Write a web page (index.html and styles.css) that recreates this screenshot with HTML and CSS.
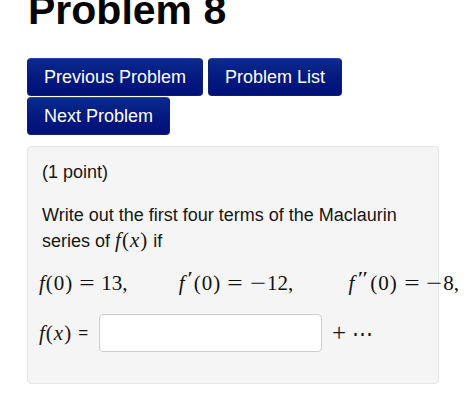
FILE: index.html
```html
<!DOCTYPE html>
<html>
<head>
<meta charset="utf-8">
<link rel="stylesheet" href="styles.css">
</head>
<body>
<div class="page">
  <h1 class="title">Problem 8</h1>
  <div class="nav">
    <a class="btn">Previous Problem</a>
    <a class="btn">Problem List</a>
    <a class="btn">Next Problem</a>
  </div>
  <div class="panel">
    <p class="points">(1 point)</p>
    <p class="text">Write out the first four terms of the Maclaurin series of <span class="mi">f</span><span class="mo">(</span><span class="mi">x</span><span class="mo">)</span> if</p>
    <div class="math-line">
      <span class="term"><span class="mi">f</span><span class="p">(</span>0<span class="p">)</span><span class="rel">=</span>13,</span>
      <span class="term t2"><span class="mi">f</span><span class="prime">′</span><span class="p">(</span>0<span class="p">)</span><span class="rel">=</span><span class="minus">−</span>12,</span>
      <span class="term t3"><span class="mi">f</span><span class="prime dbl">″</span><span class="p">(</span>0<span class="p">)</span><span class="rel">=</span><span class="minus">−</span>8,</span>
    </div>
    <div class="answer-row">
      <span class="lhs"><span class="mi">f</span><span class="p">(</span><span class="mi">x</span><span class="p">)</span></span><span class="eq">=</span>
      <span class="input"></span>
      <span class="rest"><span class="plus">+</span><span class="dots">⋯</span></span>
    </div>
  </div>
</div>
</body>
</html>
```

FILE: styles.css
```css
html, body {
  margin: 0;
  padding: 0;
  background: #ffffff;
}
body {
  font-family: "Liberation Sans", Arial, sans-serif;
  color: #111;
  overflow: hidden;
}
.page {
  padding-left: 27px;
  width: 447px;
}
.title {
  margin: -10px 0 0 1px;
  font-size: 41px;
  line-height: 41px;
  font-weight: bold;
  color: #050505;
}
.nav {
  margin-top: 27px;
  display: flex;
  flex-wrap: wrap;
  column-gap: 5px;
  row-gap: 1px;
  width: 330px;
}
.btn {
  display: block;
  box-sizing: border-box;
  height: 38px;
  line-height: 36px;
  padding: 0 16px;
  font-size: 18px;
  color: #ffffff;
  background: linear-gradient(#0b2a8e, #041a80 50%, #001078);
  border: 1px solid #0a2270;
  border-top-color: #2a46a0;
  border-radius: 4px;
  white-space: nowrap;
}
.panel {
  margin-top: 11px;
  box-sizing: border-box;
  width: 412px;
  height: 238px;
  background: #f5f5f5;
  border: 1px solid #e6e6e6;
  border-radius: 4px;
  padding: 12px 14px;
  font-size: 18px;
  line-height: 26px;
  color: #161616;
}
.panel p {
  margin: 0;
}
.points {
  margin-bottom: 17px !important;
}
.mi {
  font-family: "Liberation Serif", "Times New Roman", serif;
  font-style: italic;
  font-size: 21px;
}
.mo {
  font-family: "Liberation Serif", "Times New Roman", serif;
  font-size: 21px;
}
.text .mi, .text .mo {
  line-height: 0;
}
.text .mo {
  margin: 0 1px;
}
.p {
  margin: 0 1px;
}
.math-line {
  margin-top: 10px;
  margin-left: -3px;
  font-family: "Liberation Serif", "Times New Roman", serif;
  font-size: 21px;
  line-height: 30px;
  white-space: nowrap;
  color: #111;
}
.term {
  display: inline-block;
}
.t2 {
  margin-left: 46px;
}
.t3 {
  margin-left: 50px;
}
.prime {
  display: inline-block;
  font-size: 19px;
  vertical-align: 5px;
  margin-left: 3px;
  margin-right: 1px;
  transform: scaleX(1.3);
}
.prime.dbl {
  margin-left: 5px;
  margin-right: 2px;
}
.minus {
  display: inline-block;
  transform: scaleX(1.35);
  margin: 0 3px 0 3px;
}
.rel {
  display: inline-block;
  margin: 0 8px;
  transform: scaleX(1.3);
}
.answer-row {
  margin-top: 16px;
  margin-left: -3px;
  display: flex;
  align-items: center;
  white-space: nowrap;
}
.lhs {
  font-family: "Liberation Serif", "Times New Roman", serif;
  font-size: 21px;
}
.eq {
  font-size: 17px;
  margin-left: 6px;
}
.input {
  display: block;
  box-sizing: border-box;
  width: 223px;
  height: 38px;
  margin-left: 11px;
  background: #ffffff;
  border: 1px solid #cccccc;
  border-radius: 4px;
}
.rest {
  margin-left: 10px;
  font-family: "Liberation Serif", "Times New Roman", serif;
  font-size: 25px;
}
.plus {
  margin-right: 6px;
}
.dots {
  font-size: 21px;
}
```
